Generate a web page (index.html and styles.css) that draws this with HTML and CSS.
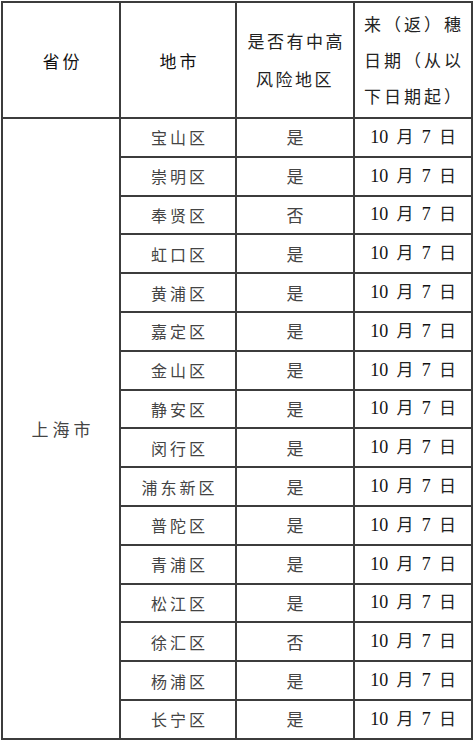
FILE: index.html
```html
<!DOCTYPE html>
<html lang="zh-CN">
<head>
<meta charset="utf-8">
<link rel="stylesheet" href="styles.css">
</head>
<body>
<table class="sheet">
  <colgroup>
    <col class="c1"><col class="c2"><col class="c3"><col class="c4">
  </colgroup>
  <thead>
    <tr class="head">
      <th class="h-bold">省份</th>
      <th class="h-bold">地市</th>
      <th class="h-risk">是否有中高<br>风险地区</th>
      <th class="h-date">来（返）穗<br>日期（从以<br>下日期起）</th>
    </tr>
  </thead>
  <tbody>
    <tr><td class="prov" rowspan="16">上海市</td><td class="dist">宝山区</td><td class="yn">是</td><td class="date"><span class="num">10</span> 月 <span class="num">7</span> 日</td></tr>
    <tr><td class="dist">崇明区</td><td class="yn">是</td><td class="date"><span class="num">10</span> 月 <span class="num">7</span> 日</td></tr>
    <tr><td class="dist">奉贤区</td><td class="yn">否</td><td class="date"><span class="num">10</span> 月 <span class="num">7</span> 日</td></tr>
    <tr><td class="dist">虹口区</td><td class="yn">是</td><td class="date"><span class="num">10</span> 月 <span class="num">7</span> 日</td></tr>
    <tr><td class="dist">黄浦区</td><td class="yn">是</td><td class="date"><span class="num">10</span> 月 <span class="num">7</span> 日</td></tr>
    <tr><td class="dist">嘉定区</td><td class="yn">是</td><td class="date"><span class="num">10</span> 月 <span class="num">7</span> 日</td></tr>
    <tr><td class="dist">金山区</td><td class="yn">是</td><td class="date"><span class="num">10</span> 月 <span class="num">7</span> 日</td></tr>
    <tr><td class="dist">静安区</td><td class="yn">是</td><td class="date"><span class="num">10</span> 月 <span class="num">7</span> 日</td></tr>
    <tr><td class="dist">闵行区</td><td class="yn">是</td><td class="date"><span class="num">10</span> 月 <span class="num">7</span> 日</td></tr>
    <tr><td class="dist">浦东新区</td><td class="yn">是</td><td class="date"><span class="num">10</span> 月 <span class="num">7</span> 日</td></tr>
    <tr><td class="dist">普陀区</td><td class="yn">是</td><td class="date"><span class="num">10</span> 月 <span class="num">7</span> 日</td></tr>
    <tr><td class="dist">青浦区</td><td class="yn">是</td><td class="date"><span class="num">10</span> 月 <span class="num">7</span> 日</td></tr>
    <tr><td class="dist">松江区</td><td class="yn">是</td><td class="date"><span class="num">10</span> 月 <span class="num">7</span> 日</td></tr>
    <tr><td class="dist">徐汇区</td><td class="yn">否</td><td class="date"><span class="num">10</span> 月 <span class="num">7</span> 日</td></tr>
    <tr><td class="dist">杨浦区</td><td class="yn">是</td><td class="date"><span class="num">10</span> 月 <span class="num">7</span> 日</td></tr>
    <tr><td class="dist">长宁区</td><td class="yn">是</td><td class="date"><span class="num">10</span> 月 <span class="num">7</span> 日</td></tr>
  </tbody>
</table>
</body>
</html>
```

FILE: styles.css
```css
html, body {
  margin: 0;
  padding: 0;
  background: #ffffff;
}

body {
  font-family: "Noto Sans CJK SC", "Liberation Serif", sans-serif;
  color: #333;
}

.sheet {
  border-collapse: collapse;
  table-layout: fixed;
  margin: 1px 0 0 1px;
  width: 470px;
}

.c1 { width: 118px; }
.c2 { width: 116px; }
.c3 { width: 118px; }
.c4 { width: 118px; }

.sheet th,
.sheet td {
  border: 2px solid #3c3c3c;
  padding: 0;
  text-align: center;
  vertical-align: middle;
  font-size: 17px;
  font-weight: 400;
}

.head {
  height: 116px;
}

.h-bold {
  font-weight: 700;
  color: #111;
  letter-spacing: 3px;
  text-indent: 3px;
}

.h-risk {
  color: #222;
  line-height: 38px;
  letter-spacing: 2.5px;
  text-indent: 2.5px;
}

.sheet .h-date {
  color: #222;
  text-align: left;
  line-height: 36px;
  letter-spacing: 3px;
  padding-left: 9px;
}

.sheet tbody tr {
  height: 38.8px;
}

.prov {
  font-size: 17px;
  color: #444;
  letter-spacing: 4px;
  text-indent: 4px;
}

.sheet .dist {
  font-size: 16px;
  color: #444;
  letter-spacing: 3px;
  text-indent: 3px;
  line-height: 20px;
}

.sheet .yn {
  font-size: 17px;
  color: #444;
  line-height: 20px;
}

.sheet .date {
  font-size: 17px;
  color: #222;
  word-spacing: 4px;
  line-height: 20px;
  font-family: "Liberation Serif", "Noto Sans CJK SC", serif;
}

.date .num {
  font-family: "Liberation Serif", serif;
  color: #111;
  font-size: 18px;
}
```
